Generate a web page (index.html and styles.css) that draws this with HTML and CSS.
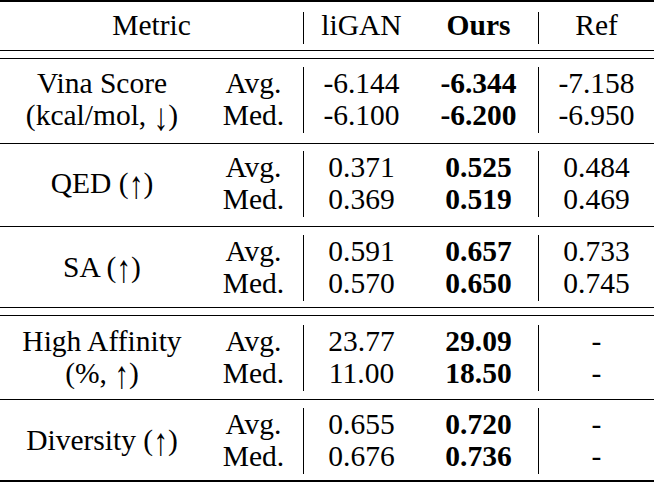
FILE: index.html
```html
<!DOCTYPE html>
<html>
<head>
<meta charset="utf-8">
<link rel="stylesheet" href="styles.css">
</head>
<body>
<div class="table">
  <div class="rule thick"></div>
  <div class="sec head">
    <div class="cell metric">Metric</div>
    <div class="cell vl">liGAN</div>
    <div class="cell b">Ours</div>
    <div class="cell vl">Ref</div>
  </div>
  <div class="rule double"></div>
  <div class="sec s-vina">
    <div class="cell">Vina Score<br>(kcal/mol, <span class="arr">↓</span>)</div>
    <div class="cell">Avg.<br>Med.</div>
    <div class="cell vl">-6.144<br>-6.100</div>
    <div class="cell b">-6.344<br>-6.200</div>
    <div class="cell vl">-7.158<br>-6.950</div>
  </div>
  <div class="rule"></div>
  <div class="sec s-qed">
    <div class="cell mid">QED (<span class="arr">↑</span>)</div>
    <div class="cell">Avg.<br>Med.</div>
    <div class="cell vl">0.371<br>0.369</div>
    <div class="cell b">0.525<br>0.519</div>
    <div class="cell vl">0.484<br>0.469</div>
  </div>
  <div class="rule"></div>
  <div class="sec s-sa">
    <div class="cell mid">SA (<span class="arr">↑</span>)</div>
    <div class="cell">Avg.<br>Med.</div>
    <div class="cell vl">0.591<br>0.570</div>
    <div class="cell b">0.657<br>0.650</div>
    <div class="cell vl">0.733<br>0.745</div>
  </div>
  <div class="rule double"></div>
  <div class="sec s-ha">
    <div class="cell">High Affinity<br>(%, <span class="arr">↑</span>)</div>
    <div class="cell">Avg.<br>Med.</div>
    <div class="cell vl">23.77<br>11.00</div>
    <div class="cell b">29.09<br>18.50</div>
    <div class="cell vl">-<br>-</div>
  </div>
  <div class="rule"></div>
  <div class="sec s-div">
    <div class="cell mid">Diversity (<span class="arr">↑</span>)</div>
    <div class="cell">Avg.<br>Med.</div>
    <div class="cell vl">0.655<br>0.676</div>
    <div class="cell b">0.720<br>0.736</div>
    <div class="cell vl">-<br>-</div>
  </div>
  <div class="rule thick"></div>
</div>
</body>
</html>
```

FILE: styles.css
```css
html, body {
  margin: 0;
  padding: 0;
  background: #ffffff;
}

body {
  font-size: 29.5px;
  color: #000000;
}

.table {
  width: 654px;
  font-family: "Liberation Serif", serif;
}

.rule {
  border-top: 1px solid #000;
}

.rule.thick {
  border-top: 2px solid #000;
}

.rule.double {
  border-top: 1px solid #000;
  border-bottom: 1px solid #000;
  height: 7px;
}

.sec {
  display: grid;
  grid-template-columns: 204px 99px 116px 119px 116px;
}

.cell {
  text-align: center;
  line-height: 32px;
  padding-bottom: 2px;
  white-space: nowrap;
}

.cell.mid {
  display: flex;
  align-items: center;
  justify-content: center;
}

.cell.vl {
  border-left: 1px solid #000;
}

.cell.b {
  font-weight: bold;
}

.arr {
  display: inline-block;
  transform: translateY(2px) scaleY(1.3);
}

.head .cell {
  line-height: 27px;
  padding-bottom: 5px;
}

.head .metric {
  grid-column: span 2;
}

.head {
  padding: 10px 0 6px;
}

.s-vina {
  padding: 8px 0 10px;
}

.s-qed {
  padding: 7px 0 9px;
}

.s-sa {
  padding: 8px 0 6px;
}

.s-ha {
  padding: 9px 0 8px;
}

.s-div {
  padding: 8px 0 6px;
}
```
